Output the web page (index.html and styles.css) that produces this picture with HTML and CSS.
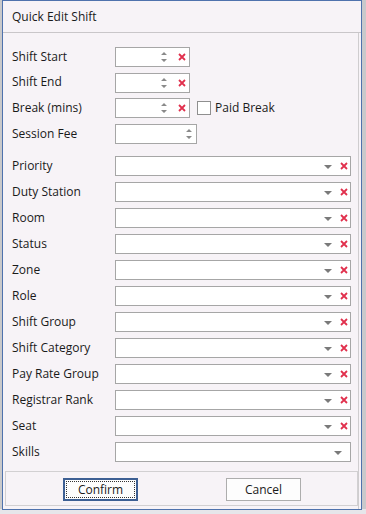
FILE: index.html
```html
<!DOCTYPE html>
<html>
<head>
<meta charset="utf-8">
<link rel="stylesheet" href="styles.css">
</head>
<body>
<div class="screen">
  <div class="dialog">
    <div class="title">Quick Edit Shift</div>
    <div class="panel">
      <div class="form">
        <div class="group top">
          <div class="row">
            <span class="label">Shift Start</span>
            <div class="box spin"><span class="fill"></span>
              <svg class="arrows" width="8" height="12" viewBox="0 0 8 12"><path d="M1 4 L4 1 L7 4 Z M1 8 L4 11 L7 8 Z" fill="#8a8a8a"/></svg>
              <svg class="x" width="8" height="8" viewBox="0 0 8 8"><path d="M1 1 L7 7 M7 1 L1 7" stroke="#e1304d" stroke-width="1.8"/></svg>
            </div>
          </div>
          <div class="row">
            <span class="label">Shift End</span>
            <div class="box spin"><span class="fill"></span>
              <svg class="arrows" width="8" height="12" viewBox="0 0 8 12"><path d="M1 4 L4 1 L7 4 Z M1 8 L4 11 L7 8 Z" fill="#8a8a8a"/></svg>
              <svg class="x" width="8" height="8" viewBox="0 0 8 8"><path d="M1 1 L7 7 M7 1 L1 7" stroke="#e1304d" stroke-width="1.8"/></svg>
            </div>
          </div>
          <div class="row">
            <span class="label">Break (mins)</span>
            <div class="box spin"><span class="fill"></span>
              <svg class="arrows" width="8" height="12" viewBox="0 0 8 12"><path d="M1 4 L4 1 L7 4 Z M1 8 L4 11 L7 8 Z" fill="#8a8a8a"/></svg>
              <svg class="x" width="8" height="8" viewBox="0 0 8 8"><path d="M1 1 L7 7 M7 1 L1 7" stroke="#e1304d" stroke-width="1.8"/></svg>
            </div>
            <span class="check"></span>
            <span class="check-label">Paid Break</span>
          </div>
          <div class="row">
            <span class="label">Session Fee</span>
            <div class="box fee"><span class="fill"></span>
              <svg class="arrows" width="8" height="12" viewBox="0 0 8 12"><path d="M1 4 L4 1 L7 4 Z M1 8 L4 11 L7 8 Z" fill="#8a8a8a"/></svg>
            </div>
          </div>
        </div>
        <div class="group combos">
          <div class="row"><span class="label">Priority</span><div class="box combo"><span class="fill"></span><svg class="drop" width="8" height="4" viewBox="0 0 8 4"><path d="M0 0 L8 0 L4 4 Z" fill="#7a7a7a"/></svg><svg class="x" width="8" height="8" viewBox="0 0 8 8"><path d="M1 1 L7 7 M7 1 L1 7" stroke="#e1304d" stroke-width="1.8"/></svg></div></div>
          <div class="row"><span class="label">Duty Station</span><div class="box combo"><span class="fill"></span><svg class="drop" width="8" height="4" viewBox="0 0 8 4"><path d="M0 0 L8 0 L4 4 Z" fill="#7a7a7a"/></svg><svg class="x" width="8" height="8" viewBox="0 0 8 8"><path d="M1 1 L7 7 M7 1 L1 7" stroke="#e1304d" stroke-width="1.8"/></svg></div></div>
          <div class="row"><span class="label">Room</span><div class="box combo"><span class="fill"></span><svg class="drop" width="8" height="4" viewBox="0 0 8 4"><path d="M0 0 L8 0 L4 4 Z" fill="#7a7a7a"/></svg><svg class="x" width="8" height="8" viewBox="0 0 8 8"><path d="M1 1 L7 7 M7 1 L1 7" stroke="#e1304d" stroke-width="1.8"/></svg></div></div>
          <div class="row"><span class="label">Status</span><div class="box combo"><span class="fill"></span><svg class="drop" width="8" height="4" viewBox="0 0 8 4"><path d="M0 0 L8 0 L4 4 Z" fill="#7a7a7a"/></svg><svg class="x" width="8" height="8" viewBox="0 0 8 8"><path d="M1 1 L7 7 M7 1 L1 7" stroke="#e1304d" stroke-width="1.8"/></svg></div></div>
          <div class="row"><span class="label">Zone</span><div class="box combo"><span class="fill"></span><svg class="drop" width="8" height="4" viewBox="0 0 8 4"><path d="M0 0 L8 0 L4 4 Z" fill="#7a7a7a"/></svg><svg class="x" width="8" height="8" viewBox="0 0 8 8"><path d="M1 1 L7 7 M7 1 L1 7" stroke="#e1304d" stroke-width="1.8"/></svg></div></div>
          <div class="row"><span class="label">Role</span><div class="box combo"><span class="fill"></span><svg class="drop" width="8" height="4" viewBox="0 0 8 4"><path d="M0 0 L8 0 L4 4 Z" fill="#7a7a7a"/></svg><svg class="x" width="8" height="8" viewBox="0 0 8 8"><path d="M1 1 L7 7 M7 1 L1 7" stroke="#e1304d" stroke-width="1.8"/></svg></div></div>
          <div class="row"><span class="label">Shift Group</span><div class="box combo"><span class="fill"></span><svg class="drop" width="8" height="4" viewBox="0 0 8 4"><path d="M0 0 L8 0 L4 4 Z" fill="#7a7a7a"/></svg><svg class="x" width="8" height="8" viewBox="0 0 8 8"><path d="M1 1 L7 7 M7 1 L1 7" stroke="#e1304d" stroke-width="1.8"/></svg></div></div>
          <div class="row"><span class="label">Shift Category</span><div class="box combo"><span class="fill"></span><svg class="drop" width="8" height="4" viewBox="0 0 8 4"><path d="M0 0 L8 0 L4 4 Z" fill="#7a7a7a"/></svg><svg class="x" width="8" height="8" viewBox="0 0 8 8"><path d="M1 1 L7 7 M7 1 L1 7" stroke="#e1304d" stroke-width="1.8"/></svg></div></div>
          <div class="row"><span class="label">Pay Rate Group</span><div class="box combo"><span class="fill"></span><svg class="drop" width="8" height="4" viewBox="0 0 8 4"><path d="M0 0 L8 0 L4 4 Z" fill="#7a7a7a"/></svg><svg class="x" width="8" height="8" viewBox="0 0 8 8"><path d="M1 1 L7 7 M7 1 L1 7" stroke="#e1304d" stroke-width="1.8"/></svg></div></div>
          <div class="row"><span class="label">Registrar Rank</span><div class="box combo"><span class="fill"></span><svg class="drop" width="8" height="4" viewBox="0 0 8 4"><path d="M0 0 L8 0 L4 4 Z" fill="#7a7a7a"/></svg><svg class="x" width="8" height="8" viewBox="0 0 8 8"><path d="M1 1 L7 7 M7 1 L1 7" stroke="#e1304d" stroke-width="1.8"/></svg></div></div>
          <div class="row"><span class="label">Seat</span><div class="box combo"><span class="fill"></span><svg class="drop" width="8" height="4" viewBox="0 0 8 4"><path d="M0 0 L8 0 L4 4 Z" fill="#7a7a7a"/></svg><svg class="x" width="8" height="8" viewBox="0 0 8 8"><path d="M1 1 L7 7 M7 1 L1 7" stroke="#e1304d" stroke-width="1.8"/></svg></div></div>
          <div class="row"><span class="label">Skills</span><div class="box combo"><span class="fill"></span><svg class="drop" width="8" height="4" viewBox="0 0 8 4"><path d="M0 0 L8 0 L4 4 Z" fill="#7a7a7a"/></svg></div></div>
        </div>
      </div>
      <div class="footer">
        <div class="btn primary"><span class="focus">Confirm</span></div>
        <div class="btn">Cancel</div>
      </div>
    </div>
  </div>
  <div class="under"></div>
</div>
</body>
</html>
```
FILE: styles.css
```css
html, body {
  margin: 0;
  padding: 0;
}
body {
  width: 366px;
  height: 514px;
  overflow: hidden;
  background: #c9c9cb;
  font-family: "Open Sans", "Noto Sans", sans-serif;
  font-size: 12px;
  color: #1a1a1a;
}
.screen {
  position: relative;
  width: 366px;
  height: 514px;
  background: #c9c9cb;
}
.dialog {
  position: relative;
  z-index: 1;
  margin-left: 2px;
  width: 358px;
  height: 508px;
  border: 1px solid #4f72ad;
  background: #f7f3f7;
  display: flex;
  flex-direction: column;
}
.title {
  height: 31px;
  line-height: 31px;
  padding-left: 9px;
  border-bottom: 1px solid #c9c6c9;
  flex: none;
}
.panel {
  flex: 1;
  display: flex;
  flex-direction: column;
  border-right: 1px solid #cfcdcf;
  margin-right: 2px;
}
.form {
  flex: 1;
  padding: 14px 0 0 9px;
  display: flex;
  flex-direction: column;
  gap: 12px;
}
.group {
  display: flex;
  flex-direction: column;
}
.top {
  gap: 5.7px;
}
.combos {
  gap: 6px;
}
.row {
  display: flex;
  align-items: center;
  height: 20px;
}
.label {
  width: 103px;
  flex: none;
  position: relative;
  top: -1px;
}
.box {
  height: 18px;
  border: 1px solid #a6a6a6;
  background: #ffffff;
  display: flex;
  align-items: center;
  box-sizing: content-box;
}
.fill {
  flex: 1;
}
.spin {
  width: 73px;
}
.fee {
  width: 80px;
}
.combo {
  width: 234px;
}
.spin .arrows {
  margin-right: 10px;
}
.fee .arrows {
  margin-right: 3px;
}
.x {
  margin-right: 3px;
}
.drop {
  margin-right: 8px;
  margin-top: 1px;
}
.combo .x {
  margin-right: 2px;
}
.check {
  width: 12px;
  height: 12px;
  border: 1px solid #8f8f8f;
  background: #ffffff;
  margin-left: 7px;
  flex: none;
}
.check-label {
  margin-left: 4px;
  position: relative;
  top: -1px;
}
.footer {
  height: 33px;
  margin: 0 0 3px 2px;
  border: 1px solid #d2d0d2;
  display: flex;
  align-items: center;
  padding-left: 57px;
  gap: 88px;
}
.btn {
  width: 73px;
  height: 21px;
  border: 1px solid #adadad;
  background: #fdfdfd;
  display: flex;
  align-items: center;
  justify-content: center;
  margin-top: 2px;
}
.btn.primary {
  border: 2px solid #3d5f93;
  width: 71px;
  height: 19px;
}
.focus {
  display: flex;
  align-items: center;
  justify-content: center;
  width: 67px;
  height: 15px;
  border: 1px dotted #333;
}
.under {
  position: absolute;
  left: 0;
  right: 0;
  bottom: 0;
  height: 5px;
  background: #e6e6ea;
}
```
